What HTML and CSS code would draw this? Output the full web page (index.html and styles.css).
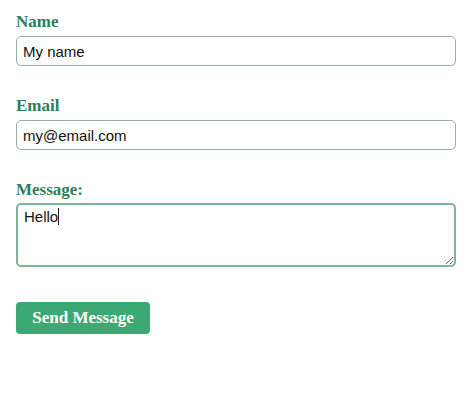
FILE: index.html
```html
<!DOCTYPE html>
<html>
<head>
<meta charset="utf-8">
<link rel="stylesheet" href="styles.css">
</head>
<body>
<form class="contact">
  <div class="field">
    <label class="label" for="name">Name</label>
    <input class="input" id="name" type="text" value="My name">
  </div>
  <div class="field">
    <label class="label" for="email">Email</label>
    <input class="input" id="email" type="text" value="my@email.com">
  </div>
  <div class="field">
    <label class="label" for="msg">Message:</label>
    <div class="area-wrap">
      <textarea class="area" id="msg">Hello</textarea>
      <span class="caret"></span>
    </div>
  </div>
  <div class="actions">
    <button class="btn" type="button">Send Message</button>
  </div>
</form>
</body>
</html>
```
FILE: styles.css
```css
html, body {
  margin: 0;
  padding: 0;
  background: #ffffff;
}
body {
  padding: 12px 16px;
}
.contact {
  width: 440px;
  display: flex;
  flex-direction: column;
  gap: 30px;
}
.field {
  display: flex;
  flex-direction: column;
  gap: 4px;
}
.label {
  font-family: "Liberation Serif", serif;
  font-weight: bold;
  font-size: 17px;
  line-height: 20px;
  color: #2f7d5a;
}
.input {
  box-sizing: border-box;
  height: 30px;
  width: 100%;
  margin: 0;
  padding: 0 6px;
  border: 1px solid #98aea3;
  border-radius: 5px;
  font-family: "Liberation Sans", sans-serif;
  font-size: 15px;
  color: #111;
  background: #fff;
  outline: none;
}
.area-wrap {
  position: relative;
  margin-top: -1px;
}
.area {
  box-sizing: border-box;
  display: block;
  width: 100%;
  height: 64px;
  margin: 0;
  padding: 3px 6px;
  border: 2px solid #7bb699;
  border-radius: 5px;
  font-family: "Liberation Sans", sans-serif;
  font-size: 15px;
  line-height: 18px;
  color: #111;
  background: #fff;
  outline: none;
}
.caret {
  position: absolute;
  left: 42px;
  top: 5px;
  width: 1px;
  height: 17px;
  background: #222;
}
.actions {
  padding-top: 5px;
}
.btn {
  width: 134px;
  height: 32px;
  border: none;
  border-radius: 4px;
  background: #3ca873;
  color: #ffffff;
  font-family: "Liberation Serif", serif;
  font-weight: bold;
  font-size: 17px;
  padding: 0;
}
```
